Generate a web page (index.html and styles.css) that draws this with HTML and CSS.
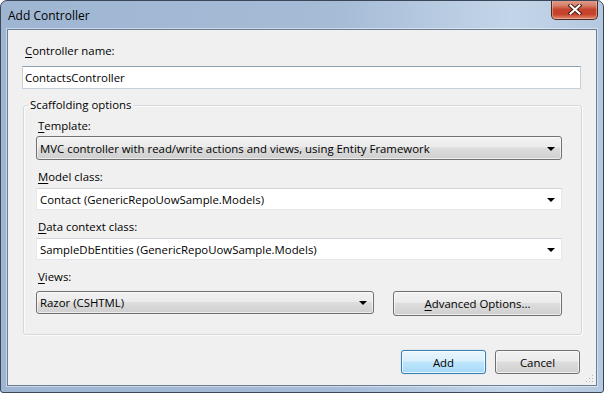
FILE: index.html
```html
<!DOCTYPE html>
<html>
<head>
<meta charset="utf-8">
<link rel="stylesheet" href="styles.css">
</head>
<body>
<div class="window">
  <div class="titlebar">
    <span class="title">Add Controller</span>
    <button class="close" aria-label="Close">
      <svg width="16" height="11" viewBox="0 0 16 11">
        <path d="M3.5 1.5 L12.5 9.5 M12.5 1.5 L3.5 9.5" stroke="#4a2018" stroke-width="4" stroke-linecap="square"/>
        <path d="M3.5 1.5 L12.5 9.5 M12.5 1.5 L3.5 9.5" stroke="#ffffff" stroke-width="2" stroke-linecap="square"/>
      </svg>
    </button>
  </div>
  <div class="client">
    <div class="label"><u>C</u>ontroller name:</div>
    <div class="textbox name">ContactsController</div>
    <fieldset class="group">
      <legend>Scaffolding options</legend>
      <div class="label"><u>T</u>emplate:</div>
      <div class="combo button-like">
        <span>MVC controller with read/write actions and views, using Entity Framework</span>
        <span class="arrow"></span>
      </div>
      <div class="label gap"><u>M</u>odel class:</div>
      <div class="combo white">
        <span>Contact (GenericRepoUowSample.Models)</span>
        <span class="arrow"></span>
      </div>
      <div class="label gap"><u>D</u>ata context class:</div>
      <div class="combo white">
        <span>SampleDbEntities (GenericRepoUowSample.Models)</span>
        <span class="arrow"></span>
      </div>
      <div class="label gap"><u>V</u>iews:</div>
      <div class="views-row">
        <div class="combo button-like views">
          <span>Razor (CSHTML)</span>
          <span class="arrow"></span>
        </div>
        <button class="btn advanced"><u>A</u>dvanced Options...</button>
      </div>
    </fieldset>
    <div class="actions">
      <button class="btn default">Add</button>
      <button class="btn">Cancel</button>
    </div>
    <svg class="grip" width="8" height="8" viewBox="0 0 8 8">
      <g fill="#b8b8b8">
        <rect x="6" y="0" width="1" height="1"/>
        <rect x="3" y="3" width="1" height="1"/><rect x="6" y="3" width="1" height="1"/>
        <rect x="0" y="6" width="1" height="1"/><rect x="3" y="6" width="1" height="1"/><rect x="6" y="6" width="1" height="1"/>
      </g>
    </svg>
  </div>
</div>
</body>
</html>
```

FILE: styles.css
```css
* { box-sizing: border-box; }
html, body { margin: 0; padding: 0; background: #ffffff; }
body {
  font-family: "Open Sans", "Noto Sans", "DejaVu Sans", sans-serif;
  font-size: 11.4px;
  color: #000;
}
u { text-decoration: underline; text-underline-offset: 2px; }

.window {
  width: 604px;
  height: 393px;
  border: 1px solid #3a4758;
  border-radius: 7px 7px 3px 3px;
  background: linear-gradient(to right, #9fb6d2 0%, #a5bbd6 55%, #c3d5e8 85%, #b4c8df 100%);
  display: flex;
  flex-direction: column;
  overflow: hidden;
}

.titlebar {
  height: 28px;
  display: flex;
  align-items: flex-start;
  justify-content: space-between;
  padding-left: 7px;
}
.title {
  line-height: 29px;
  font-size: 12px;
}
.close {
  width: 47px;
  height: 20px;
  margin: -1px 5px 0 0;
  padding: 0;
  border: 1px solid #4b2a25;
  border-top: none;
  border-radius: 0 0 5px 5px;
  background: linear-gradient(to bottom, #e2a190 0%, #d57d68 30%, #c4452e 50%, #c7412a 75%, #e28a6e 100%);
  box-shadow: inset 0 0 0 1px rgba(255,210,190,0.45);
  display: flex;
  align-items: center;
  justify-content: center;
}

.client {
  flex: 1;
  margin: 0 6px 6px 6px;
  border: 1px solid #6b7d92;
  box-shadow: 0 0 0 1px rgba(255,255,255,0.45);
  background: #f0f0f0;
  padding: 13px 15px 0 14px;
  position: relative;
}

.label {
  line-height: 16px;
  height: 16px;
  padding-left: 3px;
}

.textbox {
  background: #fff;
  border: 1px solid #c5d2de;
  border-top-color: #8ea3b6;
  height: 23px;
  line-height: 21px;
  padding-left: 2px;
}
.name { margin-top: 7px; }

.group {
  margin: 8px 0 0 1px;
  border: 1px solid #d5d9dd;
  border-radius: 3px;
  padding: 5px 19px 18px 12px;
  box-shadow: inset 1px 1px 0 #fbfbfb, 1px 1px 0 #fbfbfb;
}
.group legend {
  padding: 0 2px;
  margin-left: -8px;
  line-height: 16px;
}
.group .label { padding-left: 2px; }
.group .label.gap { margin-top: 9px; }

.combo {
  display: flex;
  align-items: center;
  justify-content: space-between;
  height: 23px;
  padding: 0 6px 0 3px;
  margin-top: 2px;
}
.combo.button-like {
  height: 24px;
  border: 1px solid #707070;
  border-radius: 3px;
  background: linear-gradient(to bottom, #f2f2f2 0%, #ebebeb 45%, #dddddd 50%, #cfcfcf 100%);
  box-shadow: inset 0 0 0 1px rgba(255,255,255,0.6);
}
.combo.white {
  background: #fff;
  height: 22px;
  border: 1px solid #e4e8ec;
  border-top-color: #d0d6dc;
  margin-top: 3px;
}
.arrow {
  width: 0;
  height: 0;
  border-left: 4px solid transparent;
  border-right: 4px solid transparent;
  border-top: 4px solid #000;
  margin-top: 1px;
}

.views-row {
  display: flex;
  gap: 19px;
  align-items: flex-start;
  margin-top: 6px;
}
.combo.views {
  width: 338px;
  margin-top: 0;
  height: 23px;
}

.btn {
  font-family: inherit;
  font-size: 11.4px;
  color: #000;
  height: 24px;
  border: 1px solid #707070;
  border-radius: 3px;
  background: linear-gradient(to bottom, #f2f2f2 0%, #ebebeb 45%, #dddddd 50%, #cfcfcf 100%);
  box-shadow: inset 0 0 0 1px rgba(255,255,255,0.65);
  padding: 0;
}
.advanced {
  width: 169px;
  height: 25px;
}

.actions {
  display: flex;
  justify-content: flex-end;
  gap: 9px;
  margin-top: 15px;
  padding-right: 1px;
}
.actions .btn { width: 85px; }
.btn.default {
  border-color: #3c7fb1;
  background: linear-gradient(to bottom, #eaf6fd 0%, #d9f0fc 45%, #bee6fd 50%, #a7d9f5 100%);
  box-shadow: inset 0 0 0 1px rgba(255,255,255,0.7), 0 0 1px #5aa9dc;
}

.grip {
  position: absolute;
  right: 2px;
  bottom: 2px;
}
```
